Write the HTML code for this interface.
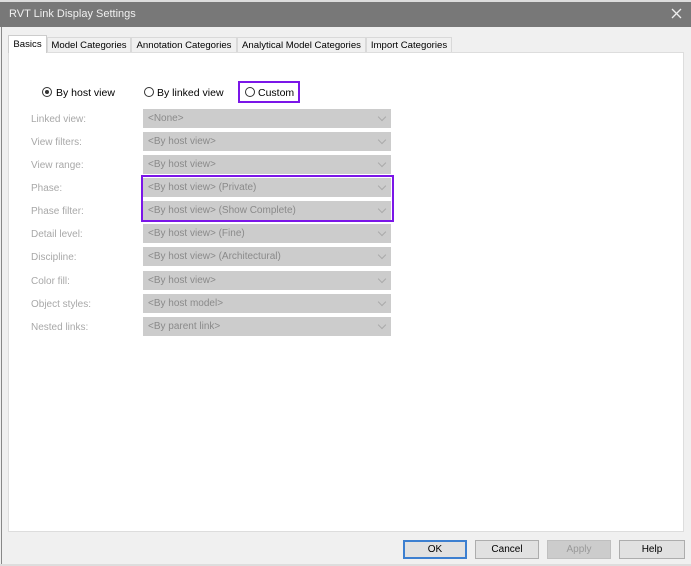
<!DOCTYPE html><html><head><style>
body{margin:0;width:691px;height:566px;background:#f0f0f0;font-family:"Liberation Sans",sans-serif;font-size:10.5px;position:relative;overflow:hidden;color:#000}
.a{position:absolute;white-space:nowrap}
.lbl{position:absolute;left:31px;color:#a8a8a8;font-size:10px;white-space:nowrap}
.dd{position:absolute;left:143px;width:248px;height:19px;background:#cccccc;color:#8a8a8a;font-size:10px;line-height:20px;box-sizing:border-box;padding-left:5px;white-space:nowrap}
.dd:after{content:"";position:absolute;right:6px;top:5px;width:5px;height:5px;border-right:1px solid #aaa;border-bottom:1px solid #aaa;transform:rotate(45deg)}
.tab{position:absolute;top:37px;height:15px;border:1px solid #d9d9d9;border-bottom:none;background:#f0f0f0;font-size:9.6px;line-height:15px;padding:0 3px;box-sizing:border-box;white-space:nowrap;overflow:hidden;text-align:center}
.btn{position:absolute;top:540px;height:19px;width:64px;border:1px solid #adadad;background:#e1e1e1;text-align:center;line-height:17px;font-size:10px;box-sizing:border-box}
.r{position:absolute;width:10px;height:10px;border:1px solid #333;border-radius:50%;box-sizing:border-box;background:#fff}
</style></head><body>
<div class="a" style="left:0;top:0;width:691px;height:2px;background:#ddd"></div>
<div class="a" style="left:0;top:2px;width:691px;height:25px;background:#787878"></div>
<div class="a" style="left:9px;top:8px;color:#f0f0f0;font-size:11px">RVT Link Display Settings</div>
<svg class="a" style="left:671px;top:8px" width="11" height="11"><path d="M1 1L10 10M10 1L1 10" stroke="#eee" stroke-width="1.3"/></svg>
<div class="a" style="left:1px;top:27px;width:1px;height:537px;background:#888"></div>
<div class="a" style="left:8px;top:52px;width:676px;height:480px;background:#fff;border:1px solid #ddd;box-sizing:border-box"></div>
<div class="tab" style="left:8px;top:35px;height:18px;width:39px;background:#fff;border-color:#ccc;line-height:17px">Basics</div>
<div class="tab" style="left:47px;width:84px">Model Categories</div>
<div class="tab" style="left:131px;width:106px">Annotation Categories</div>
<div class="tab" style="left:237px;width:129px">Analytical Model Categories</div>
<div class="tab" style="left:366px;width:86px">Import Categories</div>
<div class="r" style="left:42px;top:87px"></div><div class="a" style="left:45px;top:90px;width:4px;height:4px;border-radius:50%;background:#333"></div>
<div class="a" style="left:56px;top:87px">By host view</div>
<div class="r" style="left:144px;top:87px"></div><div class="a" style="left:157px;top:87px">By linked view</div>
<div class="a" style="left:238px;top:81px;width:62px;height:22px;border:2px solid #7b16e8;box-sizing:border-box"></div>
<div class="r" style="left:245px;top:87px"></div><div class="a" style="left:258px;top:87px">Custom</div>
<div class="lbl" style="top:114px">Linked view:</div><div class="dd" style="top:109px">&lt;None&gt;</div>
<div class="lbl" style="top:137px">View filters:</div><div class="dd" style="top:132px">&lt;By host view&gt;</div>
<div class="lbl" style="top:160px">View range:</div><div class="dd" style="top:155px">&lt;By host view&gt;</div>
<div class="lbl" style="top:183px">Phase:</div><div class="dd" style="top:178px">&lt;By host view&gt; (Private)</div>
<div class="lbl" style="top:206px">Phase filter:</div><div class="dd" style="top:201px">&lt;By host view&gt; (Show Complete)</div>
<div class="lbl" style="top:229px">Detail level:</div><div class="dd" style="top:224px">&lt;By host view&gt; (Fine)</div>
<div class="lbl" style="top:252px">Discipline:</div><div class="dd" style="top:247px">&lt;By host view&gt; (Architectural)</div>
<div class="lbl" style="top:276px">Color fill:</div><div class="dd" style="top:271px">&lt;By host view&gt;</div>
<div class="lbl" style="top:299px">Object styles:</div><div class="dd" style="top:294px">&lt;By host model&gt;</div>
<div class="lbl" style="top:322px">Nested links:</div><div class="dd" style="top:317px">&lt;By parent link&gt;</div>
<div class="a" style="left:141px;top:175px;width:253px;height:47px;border:2px solid #7b16e8;box-sizing:border-box"></div>
<div class="btn" style="left:403px;border:2px solid #3c7fd0;line-height:15px">OK</div>
<div class="btn" style="left:475px">Cancel</div>
<div class="btn" style="left:547px;background:#ccc;color:#999;border-color:#bfbfbf">Apply</div>
<div class="btn" style="left:619px;width:66px">Help</div>
<div class="a" style="left:0;top:564px;width:691px;height:2px;background:#ddd"></div>
</body></html>
